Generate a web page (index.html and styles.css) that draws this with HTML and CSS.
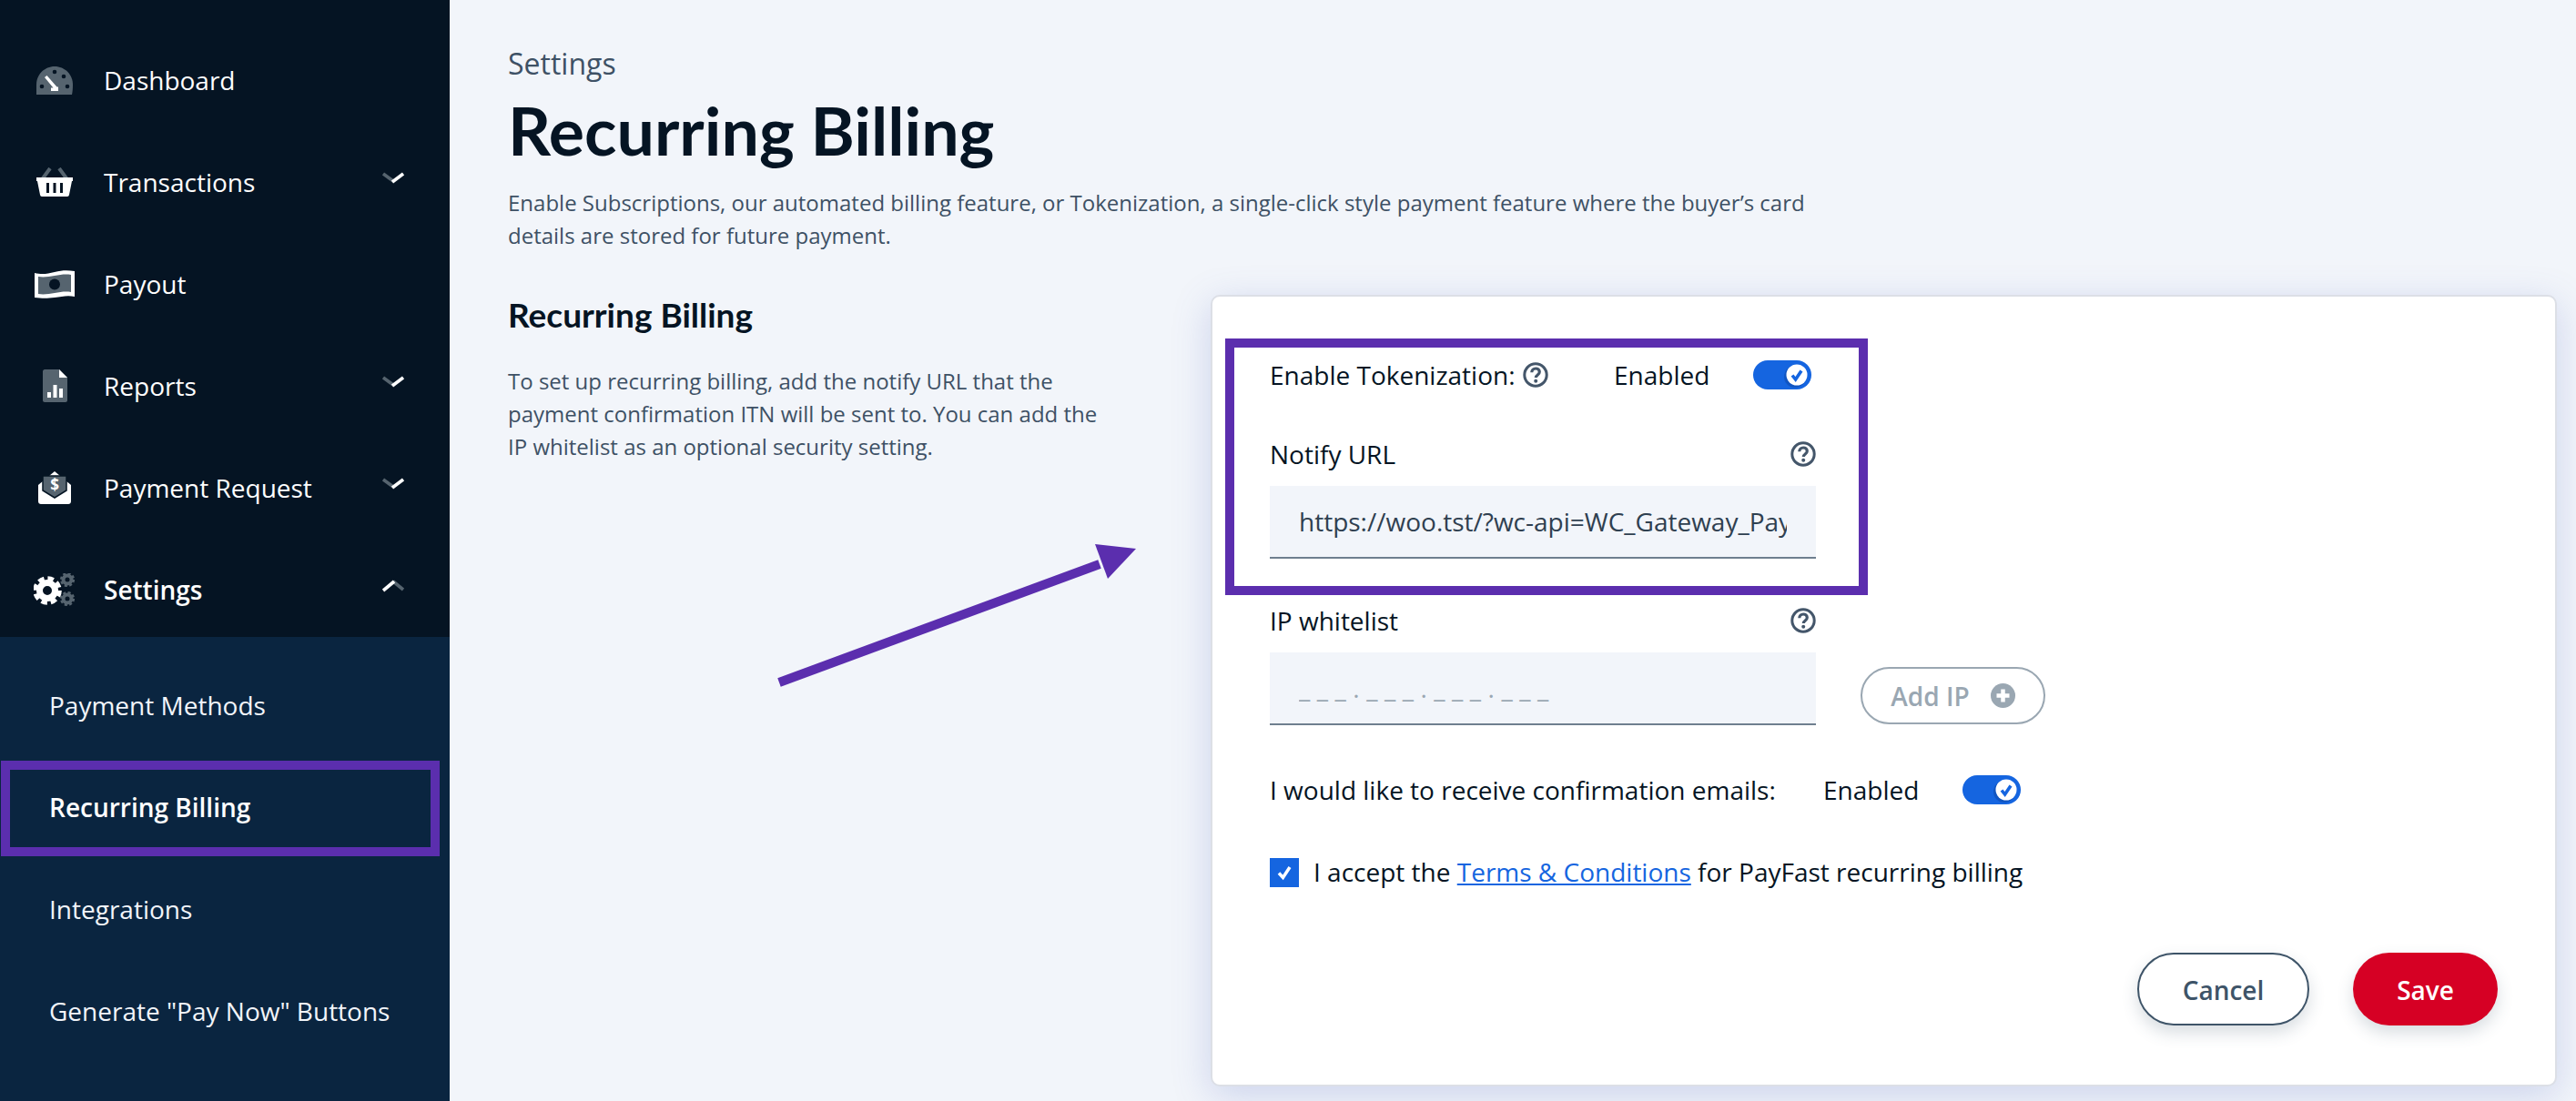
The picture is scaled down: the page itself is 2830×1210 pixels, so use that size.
FILE: index.html
```html
<!DOCTYPE html>
<html>

<head>
    <title>Recurring Billing</title>
    <link rel="stylesheet" href="styles.css">
</head>

<body>
    <svg class="sprites" width="0" height="0">
        <symbol id="chev-down" viewBox="0 0 24 16">
            <path d="M1 3l11 8" stroke="#56646f" stroke-width="3.600" fill="none" />
            <path d="M11 12L23 3" stroke="#fff" stroke-width="3.600" fill="none" />
        </symbol>
        <symbol id="chev-up" viewBox="0 0 24 16">
            <path d="M12 3l11 9" stroke="#56646f" stroke-width="3.600" fill="none" />
            <path d="M1 13L13 3" stroke="#fff" stroke-width="3.600" fill="none" />
        </symbol>
        <symbol id="help" viewBox="0 0 28 28">
            <circle cx="14" cy="14" r="12.2" fill="none" stroke="#44566a" stroke-width="3" />
            <path d="M9.8 11.2c0-2.6 1.900-4.200 4.300-4.200s4.200 1.500 4.200 3.700c0 3.300-4 3.200-4 6.300" fill="none" stroke="#44566a" stroke-width="3.200" />
            <circle cx="14.200" cy="20.800" r="2" fill="#44566a" />
        </symbol>
        <symbol id="toggle-on" viewBox="0 0 64 32">
            <rect width="64" height="32" rx="16" fill="#1565e0" />
            <circle cx="46" cy="18" r="12" fill="#0e4fb5" opacity=".7" />
            <circle cx="48" cy="16" r="11.500" fill="#fff" />
            <path d="M43 16.500l3.600 4.500L53 11.500" fill="none" stroke="#1565e0" stroke-width="3.600" />
        </symbol>
    </svg>

    <aside class="sidebar">
        <nav class="nav">
            <a class="nav-item">
                <span class="nav-icon">
                    <svg width="40" height="31" viewBox="0 0 40 31">
                        <path d="M0 31V20C0 8.900 8.900 0 20 0s20 8.900 20 20c0 4-.3 8-1 11z" fill="#56646f" />
                        <circle cx="20" cy="6" r="2.300" fill="#051423" />
                        <circle cx="30" cy="11" r="2.300" fill="#051423" />
                        <circle cx="34" cy="22" r="2.300" fill="#051423" />
                        <circle cx="6" cy="22" r="2.300" fill="#051423" />
                        <path d="M9 12l2.500-2 11 12.500H24V27h-8v-3.500h2.500z" fill="#fff" />
                    </svg>
                </span>
                <span class="nav-label">Dashboard</span>
            </a>
            <a class="nav-item">
                <span class="nav-icon">
                    <svg width="40" height="32" viewBox="0 0 40 32">
                        <path d="M7 12L15 1M33 12L25 1" stroke="#56646f" stroke-width="4" fill="none" />
                        <path d="M0 11h40v4h-1l-3 15c-.2 1.200-1 2-2 2H6c-1 0-1.800-.8-2-2L1 15H0z" fill="#fff" />
                        <path d="M11 17h3v11h-3zM18.500 17h3v11h-3zM26 17h3v11h-3z" fill="#051423" />
                    </svg>
                </span>
                <span class="nav-label">Transactions</span>
                <svg class="nav-chevron"><use href="#chev-down" /></svg>
            </a>
            <a class="nav-item">
                <span class="nav-icon">
                    <svg width="46" height="32" viewBox="0 0 46 32">
                        <path d="M1 4c8 2 14 1 22-1 8-2 14-2 22-1l0 28c-8-2-14 0-22 1-8 1-14 1-22 0z" fill="#fff" />
                        <path d="M5 8c6 1 12 0 18-1 6-1 12-2 18-1l0 19c-6-1-12 0-18 1-6 1-12 2-18 1z" fill="#56646f" />
                        <circle cx="23" cy="16.500" r="6" fill="#051423" />
                    </svg>
                </span>
                <span class="nav-label">Payout</span>
            </a>
            <a class="nav-item">
                <span class="nav-icon">
                    <svg width="27" height="36" viewBox="0 0 27 36">
                        <path d="M2 0h16l9 9v25c0 1-1 2-2 2H2c-1 0-2-1-2-2V2C0 1 1 0 2 0z" fill="#56646f" />
                        <path d="M18 0l9 9h-9z" fill="#fff" />
                        <path d="M5 25h4v6H5zM11.500 17h4v14h-4zM18 21h4v10h-4z" fill="#fff" />
                    </svg>
                </span>
                <span class="nav-label">Reports</span>
                <svg class="nav-chevron"><use href="#chev-down" /></svg>
            </a>
            <a class="nav-item">
                <span class="nav-icon">
                    <svg width="36" height="36" viewBox="0 0 36 36">
                        <path d="M0 15l18-15 18 15v18c0 1.700-1.300 3-3 3H3c-1.700 0-3-1.300-3-3z" fill="#fff" />
                        <path d="M5 5h26v16l-13 8-13-8z" fill="#56646f" stroke="#051423" stroke-width="1.500" />
                        <text x="18" y="21" class="icon-dollar">$</text>
                    </svg>
                </span>
                <span class="nav-label">Payment Request</span>
                <svg class="nav-chevron"><use href="#chev-down" /></svg>
            </a>
            <a class="nav-item is-open">
                <span class="nav-icon">
                    <svg width="46" height="36" viewBox="0 0 46 36">
                        <g fill="none" stroke="#56646f">
                            <circle cx="37" cy="7" r="4.500" stroke-width="4" />
                            <circle cx="37" cy="7" r="6.800" stroke-width="2.600" stroke-dasharray="3 2.400" />
                            <circle cx="37" cy="28" r="4.500" stroke-width="4" />
                            <circle cx="37" cy="28" r="6.800" stroke-width="2.600" stroke-dasharray="3 2.400" />
                        </g>
                        <g fill="none" stroke="#fff">
                            <circle cx="15" cy="19" r="8.500" stroke-width="7" />
                            <circle cx="15" cy="19" r="13.300" stroke-width="5" stroke-dasharray="6.500 3.950" />
                        </g>
                    </svg>
                </span>
                <span class="nav-label">Settings</span>
                <svg class="nav-chevron"><use href="#chev-up" /></svg>
            </a>
        </nav>
        <div class="subnav">
            <a class="subnav-item">Payment Methods</a>
            <a class="subnav-item is-active">Recurring Billing</a>
            <a class="subnav-item">Integrations</a>
            <a class="subnav-item">Generate "Pay Now" Buttons</a>
        </div>
    </aside>

    <main class="content">
        <div class="crumb">Settings</div>
        <h1>Recurring Billing</h1>
        <p class="intro">Enable Subscriptions, our automated billing feature, or Tokenization, a single-click style payment feature where the buyer’s card details are stored for future payment.</p>

        <div class="columns">
            <section class="about">
                <h2>Recurring Billing</h2>
                <p>To set up recurring billing, add the notify URL that the payment confirmation ITN will be sent to. You can add the IP whitelist as an optional security setting.</p>
            </section>

            <section class="card">
                <div class="toggle-row">
                    <span class="toggle-label">Enable Tokenization: <svg class="help-icon"><use href="#help" /></svg></span>
                    <span class="toggle-state">Enabled</span>
                    <svg class="toggle"><use href="#toggle-on" /></svg>
                </div>

                <div class="field">
                    <div class="field-head">
                        <label>Notify URL</label>
                        <svg class="help-icon"><use href="#help" /></svg>
                    </div>
                    <input type="text" value="https://woo.tst/?wc-api=WC_Gateway_PayFast">
                </div>

                <div class="field ip-field">
                    <div class="field-head">
                        <label>IP whitelist</label>
                        <svg class="help-icon"><use href="#help" /></svg>
                    </div>
                    <div class="ip-line">
                        <input type="text" class="ip-input" placeholder="___.___.___.___">
                        <button class="add-ip">Add IP
                            <svg width="27" height="27" viewBox="0 0 27 27">
                                <circle cx="13.500" cy="13.500" r="13.500" fill="#9aa7b2" />
                                <path d="M13.500 6.500v14M6.500 13.500h14" stroke="#fff" stroke-width="4.500" />
                            </svg>
                        </button>
                    </div>
                </div>

                <div class="toggle-row wide">
                    <span class="toggle-label">I would like to receive confirmation emails:</span>
                    <span class="toggle-state">Enabled</span>
                    <svg class="toggle"><use href="#toggle-on" /></svg>
                </div>

                <div class="accept-row">
                    <span class="checkbox">
                        <svg width="16" height="18" viewBox="0 0 16 18">
                            <path d="M2 9.500l4.500 5L14 3" fill="none" stroke="#fff" stroke-width="3.500" />
                        </svg>
                    </span>
                    <span class="accept-text">I accept the <a class="link">Terms &amp; Conditions</a> for PayFast recurring billing</span>
                </div>

                <div class="actions">
                    <button class="btn btn-cancel">Cancel</button>
                    <button class="btn btn-save">Save</button>
                </div>
            </section>
        </div>
    </main>

    <!-- purple annotations drawn over the screenshot -->
    <div class="mark mark-nav"></div>
    <div class="mark mark-form"></div>
    <svg class="mark-arrow" width="420" height="170" viewBox="0 0 420 170">
        <path d="M16 160L368 30" stroke="#5b2eae" stroke-width="10" fill="none" />
        <path d="M363 8L408 13 377 46z" fill="#5b2eae" />
    </svg>
</body>

</html>
```

FILE: styles.css
```css
* {
    box-sizing: border-box;
}

html,
body {
    height: 100%;
}

body {
    margin: 0;
    display: flex;
    position: relative;
    overflow: hidden;
    height: 1210px;
    background: #f2f5fa;
    font-family: "Open Sans", sans-serif;
    font-size: 28px;
    color: #051423;
}

.sprites {
    position: absolute;
}

/* sidebar */
.sidebar {
    width: 494px;
    flex-shrink: 0;
    display: flex;
    flex-direction: column;
    background: #051423;
    color: #fff;
}

.nav {
    height: 700px;
    padding-top: 32px;
}

.nav-item {
    display: flex;
    align-items: center;
    height: 112px;
    padding: 0 50px 0 37px;
    font-size: 28px;
}

.nav-icon {
    width: 46px;
    margin-right: 31px;
    display: flex;
    justify-content: center;
}

.nav-label {
    flex: 1;
}

.nav-item.is-open .nav-label {
    font-weight: 600;
}

.nav-chevron {
    width: 24px;
    height: 16px;
    margin-bottom: 8px;
}

.subnav {
    flex: 1;
    background: #0a2540;
    padding-top: 19px;
}

.subnav-item {
    display: flex;
    align-items: center;
    height: 112px;
    padding-left: 54px;
    font-size: 28px;
    color: #f2f5fa;
}

.subnav-item.is-active {
    font-weight: 600;
    color: #fff;
}

/* main column */
.content {
    flex: 1;
    padding: 48px 21px 18px 64px;
    color: #3e5165;
}

.crumb {
    font-size: 32px;
    line-height: 44px;
}

h1 {
    margin: 6px 0 17px;
    font-family: Lato, sans-serif;
    font-size: 73.5px;
    line-height: 90px;
    font-weight: 700;
    color: #051423;
}

.intro {
    margin: 0;
    max-width: 1440px;
    font-size: 24px;
    line-height: 36px;
}

.columns {
    display: flex;
}

.about {
    width: 772px;
    flex-shrink: 0;
    padding-top: 47px;
}

.about h2 {
    margin: 0 0 33px;
    font-family: Lato, sans-serif;
    font-size: 37px;
    line-height: 44px;
    font-weight: 700;
    color: #051423;
}

.about p {
    margin: 0;
    width: 660px;
    font-size: 24px;
    line-height: 36px;
}

/* form card */
.card {
    flex: 1;
    margin-top: 47px;
    padding: 70px 63px 65px;
    background: #fff;
    border: 2px solid #dcdfe6;
    border-radius: 10px;
    box-shadow: 0 10px 40px rgba(90, 110, 200, 0.25);
    color: #051423;
}

.toggle-row {
    display: flex;
    align-items: center;
    height: 32px;
}

.toggle-label {
    width: 378px;
    margin-right: 1px;
    display: flex;
    align-items: center;
    gap: 8px;
    white-space: nowrap;
}

.toggle-row.wide {
    margin-top: 55px;
}

.toggle-row.wide .toggle-label {
    width: 608px;
}

.toggle-state {
    width: 152px;
    margin-left: -1px;
    margin-right: 1px;
}

.toggle {
    width: 64px;
    height: 32px;
}

.help-icon {
    width: 28px;
    height: 28px;
}

.field {
    width: 600px;
    margin-top: 53px;
}

.ip-field {
    margin-top: 50px;
    width: auto;
}

.field-head {
    display: flex;
    justify-content: space-between;
    align-items: center;
    width: 600px;
    height: 36px;
    margin-bottom: 17px;
}

input {
    display: block;
    width: 600px;
    height: 80px;
    padding: 0 32px;
    background: #f2f5fa;
    border: none;
    border-bottom: 2px solid #6f7f8f;
    font-family: "Open Sans", sans-serif;
    font-size: 28px;
    color: #2f4050;
}

.ip-input::placeholder {
    color: #9aa7b2;
    letter-spacing: 7.5px;
}

.ip-line {
    display: flex;
    align-items: flex-end;
    gap: 49px;
}

.add-ip {
    display: flex;
    align-items: center;
    justify-content: center;
    gap: 23px;
    width: 203px;
    height: 63px;
    margin-bottom: 1px;
    background: #fff;
    border: 2px solid #9aa7b2;
    border-radius: 32px;
    font-family: "Open Sans", sans-serif;
    font-size: 28px;
    font-weight: 600;
    color: #9aa7b2;
}

.accept-row {
    display: flex;
    align-items: center;
    gap: 16px;
    height: 32px;
    margin-top: 59px;
}

.accept-text {
    margin-top: -2px;
}

.checkbox {
    width: 32px;
    height: 32px;
    display: flex;
    align-items: center;
    justify-content: center;
    background: #1565e0;
}

.link {
    color: #1565e0;
    text-decoration: underline;
}

.actions {
    display: flex;
    justify-content: flex-end;
    gap: 48px;
    margin-top: 72px;
}

.btn {
    height: 80px;
    padding-top: 2px;
    border-radius: 40px;
    font-family: "Open Sans", sans-serif;
    font-size: 28px;
    font-weight: 600;
    box-shadow: 0 8px 18px rgba(62, 84, 104, 0.2);
}

.btn-cancel {
    width: 189px;
    background: #fff;
    border: 2px solid #3e5468;
    color: #3e5468;
}

.btn-save {
    width: 159px;
    background: #d60024;
    border: none;
    color: #fff;
}

/* annotations */
.mark {
    position: absolute;
    border: 10px solid #5b2eae;
}

.mark-nav {
    left: 1px;
    top: 836px;
    width: 482px;
    height: 105px;
}

.mark-form {
    left: 1346px;
    top: 372px;
    width: 706px;
    height: 282px;
}

.mark-arrow {
    position: absolute;
    left: 840px;
    top: 590px;
}

.icon-dollar {
    font-family: "Open Sans", sans-serif;
    font-size: 17px;
    font-weight: 700;
    fill: #fff;
    text-anchor: middle;
}
```
